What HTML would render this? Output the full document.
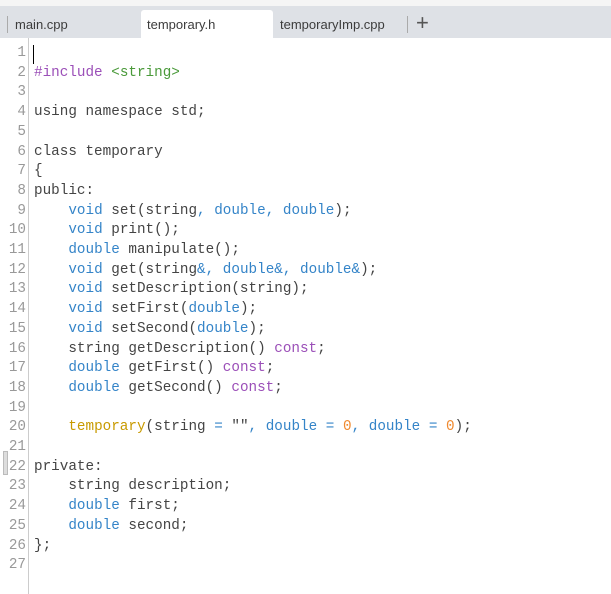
<!DOCTYPE html><html><head><style>
body{margin:0;width:611px;height:594px;overflow:hidden;background:#fff;font-family:"Liberation Sans",sans-serif}
.top{position:absolute;left:0;top:0;width:611px;height:6px;background:#f5f5f5}
.bar{position:absolute;left:0;top:6px;width:611px;height:32px;background:#dee1e6}
.tab{position:absolute;top:17px;font-size:13px;color:#3c3c3c}
.act{position:absolute;left:141px;top:10px;width:132px;height:29px;background:#fff;border-radius:3px 3px 0 0}
.sep{position:absolute;top:16px;width:1px;height:17px;background:#aaa}
.gut{position:absolute;left:0;top:38px;width:28px;height:556px;border-right:1px solid #ccc;background:#fff}
pre{margin:0;position:absolute;top:44px;font-family:"Liberation Mono",monospace;font-size:14.3px;line-height:19.7px;color:#444}
.n{left:0;width:26px;text-align:right;color:#999}
.c{left:34px}
.k{color:#3484c8}.p{color:#9b4fb8}.g{color:#4a9a3a}.y{color:#c89a00}.o{color:#f08a30}
</style></head><body>
<div class="top"></div><div class="bar"></div>
<div class="act"></div>
<div class="sep" style="left:7px"></div>
<div class="tab" style="left:15px">main.cpp</div>
<div class="tab" style="left:147px">temporary.h</div>
<div class="tab" style="left:280px">temporaryImp.cpp</div>
<div class="sep" style="left:407px"></div>
<div style="position:absolute;left:416px;top:12px;font-size:22px;color:#555;line-height:22px">+</div>
<div class="gut"></div>
<div style="position:absolute;left:3px;top:451px;width:3px;height:22px;border:1px solid #bbb;background:#ddd"></div>
<div style="position:absolute;left:33px;top:45px;width:1px;height:19px;background:#000"></div>
<pre class="n">1
2
3
4
5
6
7
8
9
10
11
12
13
14
15
16
17
18
19
20
21
22
23
24
25
26
27</pre>
<pre class="c">&#8203;
<span class="p">#include</span> <span class="g">&lt;string&gt;</span>

using namespace std;

class temporary
{
public:
    <span class="k">void</span> set(string<span class="k">,</span> <span class="k">double,</span> <span class="k">double</span>);
    <span class="k">void</span> print();
    <span class="k">double</span> manipulate();
    <span class="k">void</span> get(string<span class="k">&amp;,</span> <span class="k">double&amp;,</span> <span class="k">double&amp;</span>);
    <span class="k">void</span> setDescription(string);
    <span class="k">void</span> setFirst(<span class="k">double</span>);
    <span class="k">void</span> setSecond(<span class="k">double</span>);
    string getDescription() <span class="p">const</span>;
    <span class="k">double</span> getFirst() <span class="p">const</span>;
    <span class="k">double</span> getSecond() <span class="p">const</span>;

    <span class="y">temporary</span>(string <span class="k">=</span> ""<span class="k">,</span> <span class="k">double</span> <span class="k">=</span> <span class="o">0</span><span class="k">,</span> <span class="k">double</span> <span class="k">=</span> <span class="o">0</span>);

private:
    string description;
    <span class="k">double</span> first;
    <span class="k">double</span> second;
};
</pre>
</body></html>
